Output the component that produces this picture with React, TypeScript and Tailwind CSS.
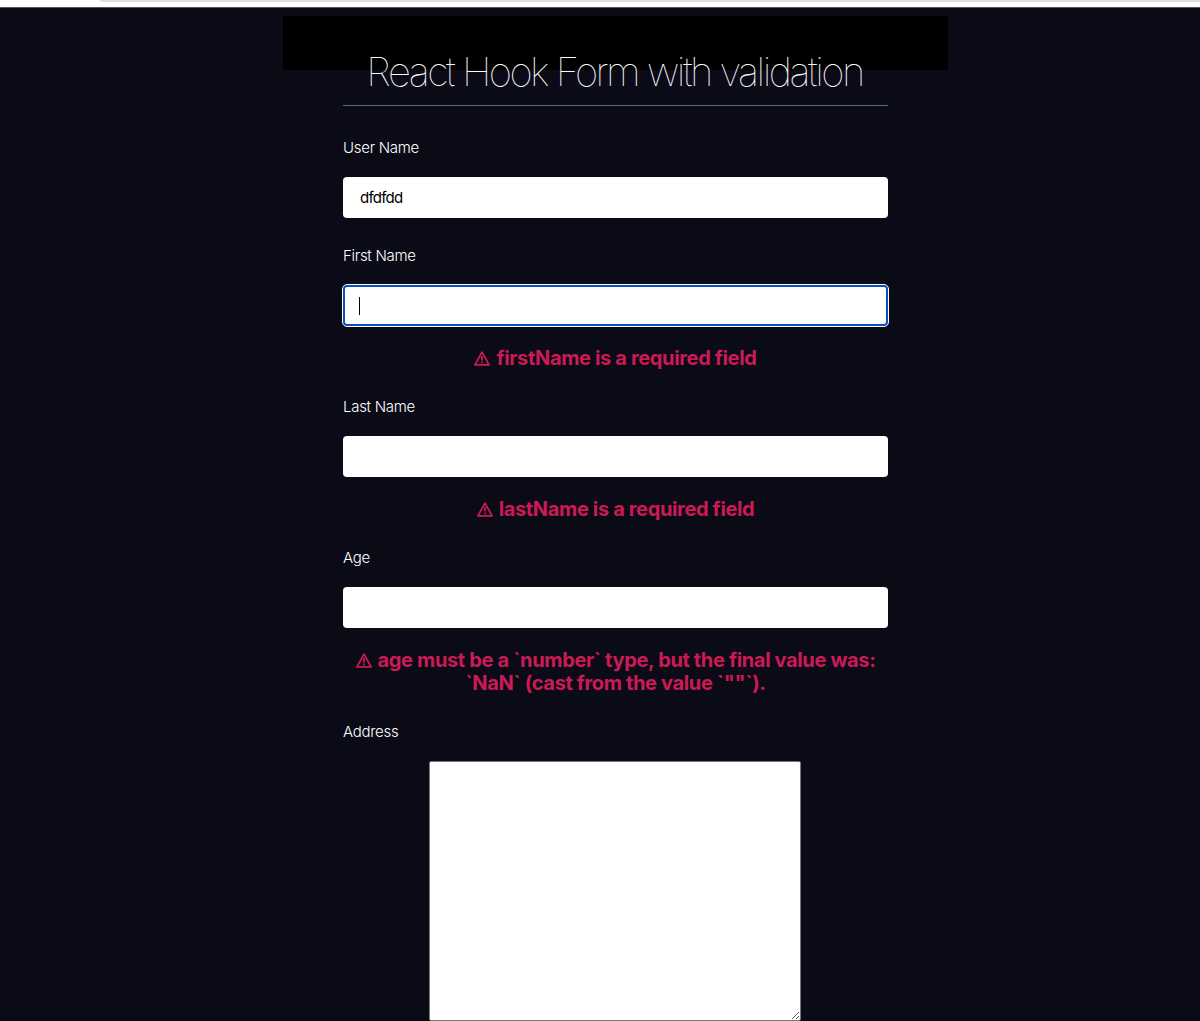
const inter = "font-['Inter','Noto_Sans',sans-serif]";

function Warn() {
  return (
    <svg viewBox="0 0 16 15" className="w-[16px] h-[15px] inline-block align-[-0.5px] mr-[6px]" fill="none" stroke="#cb1a55" strokeWidth="1.8" strokeLinejoin="round">
      <path d="M8 1.1 L15.1 13.9 H0.9 Z" />
      <path d="M8 5 V9.4" strokeWidth="1.8" />
      <path d="M8 10.4 V12.2" strokeWidth="1.8" />
    </svg>
  );
}

function Err({ children, cls }: { children: React.ReactNode; cls: string }) {
  return (
    <p className={`text-center text-[#cb1a55] font-[650] text-[20px] leading-[23px] tracking-[-0.35px] ${cls}`}>
      <Warn />
      {children}
    </p>
  );
}

function Label({ children, cls }: { children: React.ReactNode; cls: string }) {
  return <label className={`block text-white font-light text-[15px] leading-[18px] tracking-[-0.28px] ${cls}`}>{children}</label>;
}

function Field({ value, focus }: { value?: string; focus?: boolean }) {
  return (
    <div
      className={`h-[41px] w-full rounded-[4px] bg-white flex items-center text-[15px] tracking-[-0.75px] text-black ${
        focus ? "border-2 border-[#0a50c4] outline outline-1 outline-white pl-[14px]" : "pl-[17px] pt-[1px]"
      }`}
    >
      {value}
      {focus && <span className="block w-[1px] h-[18px] bg-black" />}
    </div>
  );
}

export default function App() {
  return (
    <div className={`h-[1021px] overflow-hidden bg-[#0b0a17] antialiased ${inter}`}>
      <div className="h-[8px] bg-white border-b border-[#555] overflow-hidden">
        <div className="ml-[100px] h-[2px] bg-[#dedede] rounded-bl-[8px]" />
      </div>
      <div className="ml-[283px] w-[665px] h-[54px] mt-[8px] bg-black" />
      <div className="ml-[343px] w-[545px] -mt-[54px] relative">
        <div className="border-b border-[#5f6488] h-[90px]">
          <h1 className="text-center text-white font-thin text-[40px] leading-[48px] pt-[32px] pr-[2px] whitespace-nowrap tracking-[-2.52px] opacity-[0.99]">
            React Hook Form with validation
          </h1>
        </div>
        <Label cls="mt-[33px]">User Name</Label>
        <div className="mt-[20px]"><Field value="dfdfdd" /></div>
        <Label cls="mt-[29px]">First Name</Label>
        <div className="mt-[20px]"><Field focus /></div>
        <Err cls="mt-[21px]">firstName is a required field</Err>
        <Label cls="mt-[28px]">Last Name</Label>
        <div className="mt-[20px]"><Field /></div>
        <Err cls="mt-[21px]">lastName is a required field</Err>
        <Label cls="mt-[28px]">Age</Label>
        <div className="mt-[20px]"><Field /></div>
        <Err cls="mt-[21px]">age must be a `number` type, but the final value was: `NaN` (cast from the value `""`).</Err>
        <Label cls="mt-[28px]">Address</Label>
        <div className="mt-[20px] flex justify-center">
          <textarea className="block w-[372px] h-[260px] -translate-x-[1px] bg-white rounded-[2px] border border-[#777] shrink-0" />
        </div>
      </div>
    </div>
  );
}
